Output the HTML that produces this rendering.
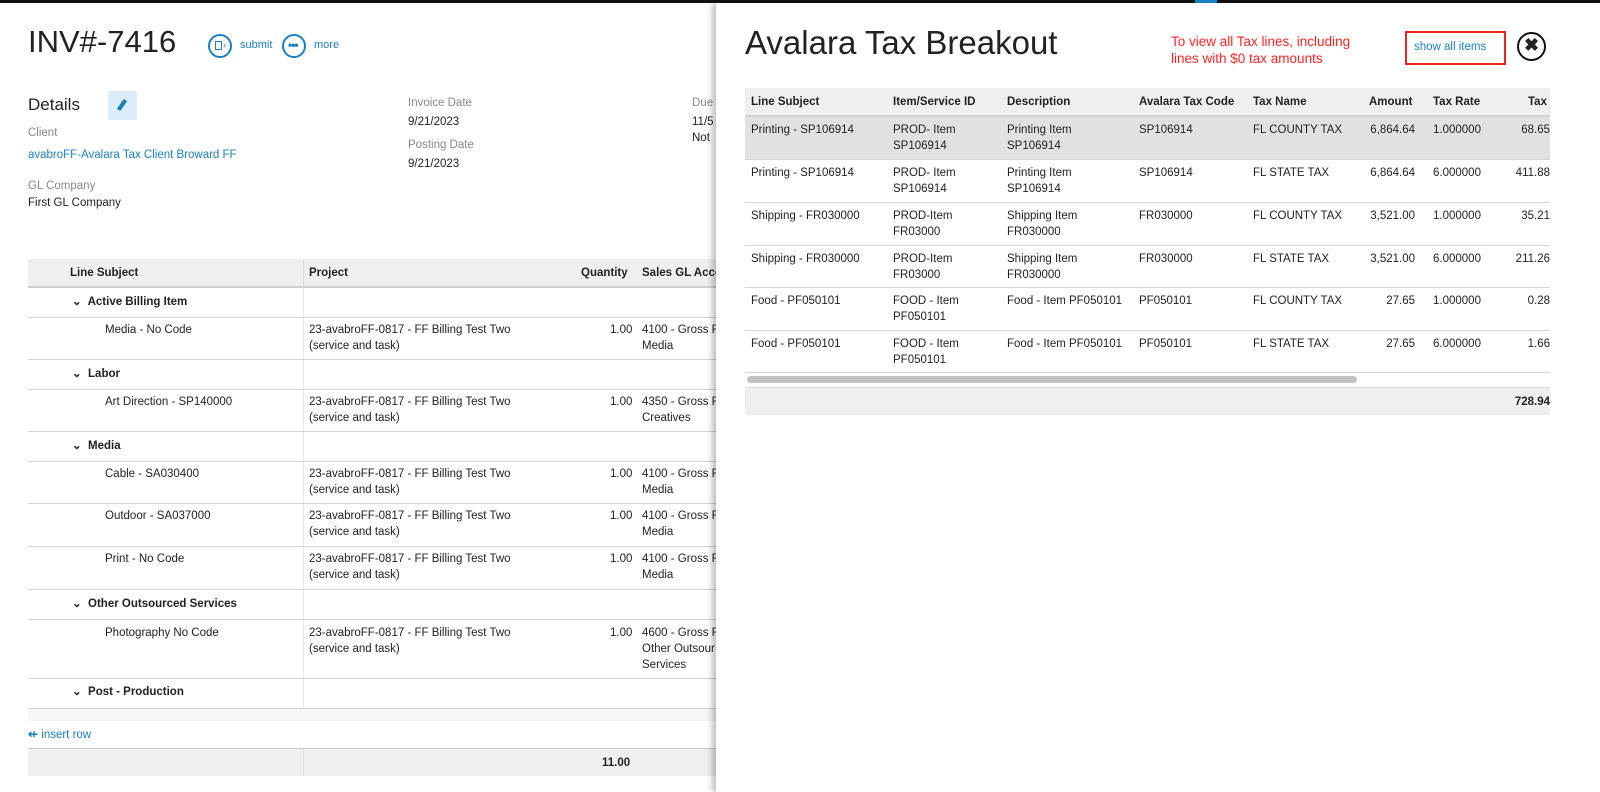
<!DOCTYPE html>
<html><head><meta charset="utf-8"><style>
*{box-sizing:border-box;margin:0;padding:0}
body{width:1600px;height:792px;overflow:hidden;background:#fff;font-family:"Liberation Sans",sans-serif;font-size:11.5px;color:#222;position:relative}
.topbar{position:absolute;left:0;top:0;width:1600px;height:3px;background:#111}
.abs{position:absolute;white-space:nowrap}
.blue{color:#1a7fc1}
.gray{color:#888}
.circ{position:absolute;width:24px;height:24px;border:2px solid #1a7fc1;border-radius:50%}
.lt{position:absolute;left:28px;width:690px}
.row{position:absolute;left:0;width:690px;border-bottom:1px solid #d4d4d4}
.vl{position:absolute;left:275px;top:0;bottom:0;border-left:1px solid #e6e6e6}
.c{position:absolute;top:8px;line-height:16px;white-space:nowrap}
.b{font-weight:bold}
.panel{position:absolute;left:716px;top:3px;width:884px;height:789px;background:#fff;box-shadow:-4px 0 6px rgba(0,0,0,.25)}
.rt{position:absolute;left:29px;width:805px}
.rr{position:absolute;left:0;width:805px;border-bottom:1px solid #d4d4d4}
</style></head><body>
<div class="topbar"></div>
<div class="abs" style="left:28px;top:24px;font-size:31px;color:#222">INV#-7416</div>
<div class="circ" style="left:208px;top:34px"><div style="position:absolute;left:5px;top:5px;width:7px;height:9px;border:1.5px solid #1a7fc1"></div><div style="position:absolute;left:13px;top:5px;font-size:9px;color:#1a7fc1;line-height:9px">›</div></div>
<div class="abs blue" style="left:240px;top:39px;font-size:11px">submit</div>
<div class="circ" style="left:282px;top:34px"><div style="position:absolute;left:4px;top:2px;font-size:12px;color:#1a7fc1;font-weight:bold;letter-spacing:-1px">•••</div></div>
<div class="abs blue" style="left:314px;top:39px;font-size:11px">more</div>
<div class="abs" style="left:28px;top:95px;font-size:17px">Details</div>
<div class="abs" style="left:108px;top:91px;width:29px;height:29px;background:#dcecf8;border-radius:2px"><div style="position:absolute;left:12px;top:8px;width:4px;height:12px;background:#1a7fc1;transform:rotate(35deg)"></div></div>
<div class="abs gray" style="left:28px;top:127px">Client</div>
<div class="abs blue" style="left:28px;top:149px">avabroFF-Avalara Tax Client Broward FF</div>
<div class="abs gray" style="left:28px;top:180px">GL Company</div>
<div class="abs" style="left:28px;top:197px">First GL Company</div>
<div class="abs gray" style="left:408px;top:97px">Invoice Date</div>
<div class="abs" style="left:408px;top:116px">9/21/2023</div>
<div class="abs gray" style="left:408px;top:139px">Posting Date</div>
<div class="abs" style="left:408px;top:158px">9/21/2023</div>
<div class="abs gray" style="left:692px;top:97px">Due</div>
<div class="abs" style="left:692px;top:116px">11/5</div>
<div class="abs" style="left:692px;top:132px">Not</div>

<div class="lt" style="top:259px">
<div class="row" style="top:0;height:29px;background:#efefef;border-bottom:2px solid #d0d0d0"><div class="vl" style="border-color:#ddd"></div><div class="c b" style="left:42px;top:6px">Line Subject</div><div class="c b" style="left:281px;top:6px">Project</div><div class="c b" style="left:553px;top:6px">Quantity</div><div class="c b" style="left:614px;top:6px">Sales GL Acco</div></div>
<div class="row" style="top:29px;height:30px"><div class="vl"></div><div class="c b" style="left:44px;top:6px">⌄&nbsp; Active Billing Item</div></div>
<div class="row" style="top:59px;height:42px"><div class="vl"></div><div class="c" style="left:77px;top:4px">Media - No Code</div><div class="c" style="left:281px;top:4px">23-avabroFF-0817 - FF Billing Test Two<br>(service and task)</div><div class="c" style="left:582px;top:4px">1.00</div><div class="c" style="left:614px;top:4px">4100 - Gross R<br>Media</div></div>
<div class="row" style="top:101px;height:30px"><div class="vl"></div><div class="c b" style="left:44px;top:6px">⌄&nbsp; Labor</div></div>
<div class="row" style="top:131px;height:42px"><div class="vl"></div><div class="c" style="left:77px;top:4px">Art Direction - SP140000</div><div class="c" style="left:281px;top:4px">23-avabroFF-0817 - FF Billing Test Two<br>(service and task)</div><div class="c" style="left:582px;top:4px">1.00</div><div class="c" style="left:614px;top:4px">4350 - Gross R<br>Creatives</div></div>
<div class="row" style="top:173px;height:30px"><div class="vl"></div><div class="c b" style="left:44px;top:6px">⌄&nbsp; Media</div></div>
<div class="row" style="top:203px;height:42px"><div class="vl"></div><div class="c" style="left:77px;top:4px">Cable - SA030400</div><div class="c" style="left:281px;top:4px">23-avabroFF-0817 - FF Billing Test Two<br>(service and task)</div><div class="c" style="left:582px;top:4px">1.00</div><div class="c" style="left:614px;top:4px">4100 - Gross R<br>Media</div></div>
<div class="row" style="top:245px;height:43px"><div class="vl"></div><div class="c" style="left:77px;top:4px">Outdoor - SA037000</div><div class="c" style="left:281px;top:4px">23-avabroFF-0817 - FF Billing Test Two<br>(service and task)</div><div class="c" style="left:582px;top:4px">1.00</div><div class="c" style="left:614px;top:4px">4100 - Gross R<br>Media</div></div>
<div class="row" style="top:288px;height:43px"><div class="vl"></div><div class="c" style="left:77px;top:4px">Print - No Code</div><div class="c" style="left:281px;top:4px">23-avabroFF-0817 - FF Billing Test Two<br>(service and task)</div><div class="c" style="left:582px;top:4px">1.00</div><div class="c" style="left:614px;top:4px">4100 - Gross R<br>Media</div></div>
<div class="row" style="top:331px;height:30px"><div class="vl"></div><div class="c b" style="left:44px;top:6px">⌄&nbsp; Other Outsourced Services</div></div>
<div class="row" style="top:361px;height:59px"><div class="vl"></div><div class="c" style="left:77px;top:5px">Photography No Code</div><div class="c" style="left:281px;top:5px">23-avabroFF-0817 - FF Billing Test Two<br>(service and task)</div><div class="c" style="left:582px;top:5px">1.00</div><div class="c" style="left:614px;top:5px">4600 - Gross R<br>Other Outsour<br>Services</div></div>
<div class="row" style="top:420px;height:30px"><div class="vl"></div><div class="c b" style="left:44px;top:5px">⌄&nbsp; Post - Production</div></div>
<div class="row" style="top:450px;height:12px;background:#f6f6f6;border:none"></div>
</div>
<div class="abs blue" style="left:28px;top:727px"><b style="font-size:12px">⇷</b> insert row</div>
<div class="abs" style="left:28px;top:748px;width:690px;height:28px;background:#efefef;border-top:1px solid #ccc"><div style="position:absolute;left:275px;top:0;bottom:0;border-left:1px solid #e2e2e2"></div><div class="c b" style="left:574px;top:6px">11.00</div></div>

<div class="panel">
<div class="abs" style="left:29px;top:21px;font-size:33px;color:#222">Avalara Tax Breakout</div>
<div class="abs" style="left:455px;top:30px;color:#f22;font-size:13.5px;line-height:17px">To view all Tax lines, including<br>lines with $0 tax amounts</div>
<div class="abs" style="left:689px;top:28px;width:101px;height:34px;border:2px solid #e22"><div class="abs blue" style="left:7px;top:8px;font-size:11.5px">show all items</div></div>
<div class="abs" style="left:801px;top:29px;width:29px;height:29px;border:2.5px solid #111;border-radius:50%;text-align:center;font-size:18px;line-height:23px;font-weight:bold">✖</div>
<div class="rt" style="top:85px">
<div class="rr" style="top:0;height:29px;background:#efefef;border-bottom:2px solid #d0d0d0"><div class="c b" style="left:6px;top:6px">Line Subject</div><div class="c b" style="left:148px;top:6px">Item/Service ID</div><div class="c b" style="left:262px;top:6px">Description</div><div class="c b" style="left:394px;top:6px">Avalara Tax Code</div><div class="c b" style="left:508px;top:6px">Tax Name</div><div class="c b" style="left:624px;top:6px">Amount</div><div class="c b" style="left:688px;top:6px">Tax Rate</div><div class="c b" style="left:783px;top:6px">Tax</div></div>
<div class="rr" style="top:29px;height:43px;background:#e1e1e1"><div class="c" style="left:6px;top:5px">Printing - SP106914</div><div class="c" style="left:148px;top:5px">PROD- Item<br>SP106914</div><div class="c" style="left:262px;top:5px">Printing Item<br>SP106914</div><div class="c" style="left:394px;top:5px">SP106914</div><div class="c" style="left:508px;top:5px">FL COUNTY TAX</div><div class="c" style="right:135px;top:5px">6,864.64</div><div class="c" style="left:688px;top:5px">1.000000</div><div class="c" style="right:0;top:5px">68.65</div></div>
<div class="rr" style="top:72px;height:43px"><div class="c" style="left:6px;top:5px">Printing - SP106914</div><div class="c" style="left:148px;top:5px">PROD- Item<br>SP106914</div><div class="c" style="left:262px;top:5px">Printing Item<br>SP106914</div><div class="c" style="left:394px;top:5px">SP106914</div><div class="c" style="left:508px;top:5px">FL STATE TAX</div><div class="c" style="right:135px;top:5px">6,864.64</div><div class="c" style="left:688px;top:5px">6.000000</div><div class="c" style="right:0;top:5px">411.88</div></div>
<div class="rr" style="top:115px;height:43px"><div class="c" style="left:6px;top:5px">Shipping - FR030000</div><div class="c" style="left:148px;top:5px">PROD-Item<br>FR03000</div><div class="c" style="left:262px;top:5px">Shipping Item<br>FR030000</div><div class="c" style="left:394px;top:5px">FR030000</div><div class="c" style="left:508px;top:5px">FL COUNTY TAX</div><div class="c" style="right:135px;top:5px">3,521.00</div><div class="c" style="left:688px;top:5px">1.000000</div><div class="c" style="right:0;top:5px">35.21</div></div>
<div class="rr" style="top:158px;height:42px"><div class="c" style="left:6px;top:5px">Shipping - FR030000</div><div class="c" style="left:148px;top:5px">PROD-Item<br>FR03000</div><div class="c" style="left:262px;top:5px">Shipping Item<br>FR030000</div><div class="c" style="left:394px;top:5px">FR030000</div><div class="c" style="left:508px;top:5px">FL STATE TAX</div><div class="c" style="right:135px;top:5px">3,521.00</div><div class="c" style="left:688px;top:5px">6.000000</div><div class="c" style="right:0;top:5px">211.26</div></div>
<div class="rr" style="top:200px;height:43px"><div class="c" style="left:6px;top:5px">Food - PF050101</div><div class="c" style="left:148px;top:5px">FOOD - Item<br>PF050101</div><div class="c" style="left:262px;top:5px">Food - Item PF050101</div><div class="c" style="left:394px;top:5px">PF050101</div><div class="c" style="left:508px;top:5px">FL COUNTY TAX</div><div class="c" style="right:135px;top:5px">27.65</div><div class="c" style="left:688px;top:5px">1.000000</div><div class="c" style="right:0;top:5px">0.28</div></div>
<div class="rr" style="top:243px;height:42px"><div class="c" style="left:6px;top:5px">Food - PF050101</div><div class="c" style="left:148px;top:5px">FOOD - Item<br>PF050101</div><div class="c" style="left:262px;top:5px">Food - Item PF050101</div><div class="c" style="left:394px;top:5px">PF050101</div><div class="c" style="left:508px;top:5px">FL STATE TAX</div><div class="c" style="right:135px;top:5px">27.65</div><div class="c" style="left:688px;top:5px">6.000000</div><div class="c" style="right:0;top:5px">1.66</div></div>
<div class="abs" style="left:2px;top:288px;width:610px;height:7px;background:#c2c2c2;border-radius:4px"></div>
<div class="rr" style="top:299px;height:28px;background:#efefef;border-top:1px solid #ddd;border-bottom:none"><div class="c b" style="right:0;top:6px">728.94</div></div>
</div>
</div>
<div class="abs" style="left:1195px;top:0;width:22px;height:3px;background:#1a7fc1"></div>
</body></html>
